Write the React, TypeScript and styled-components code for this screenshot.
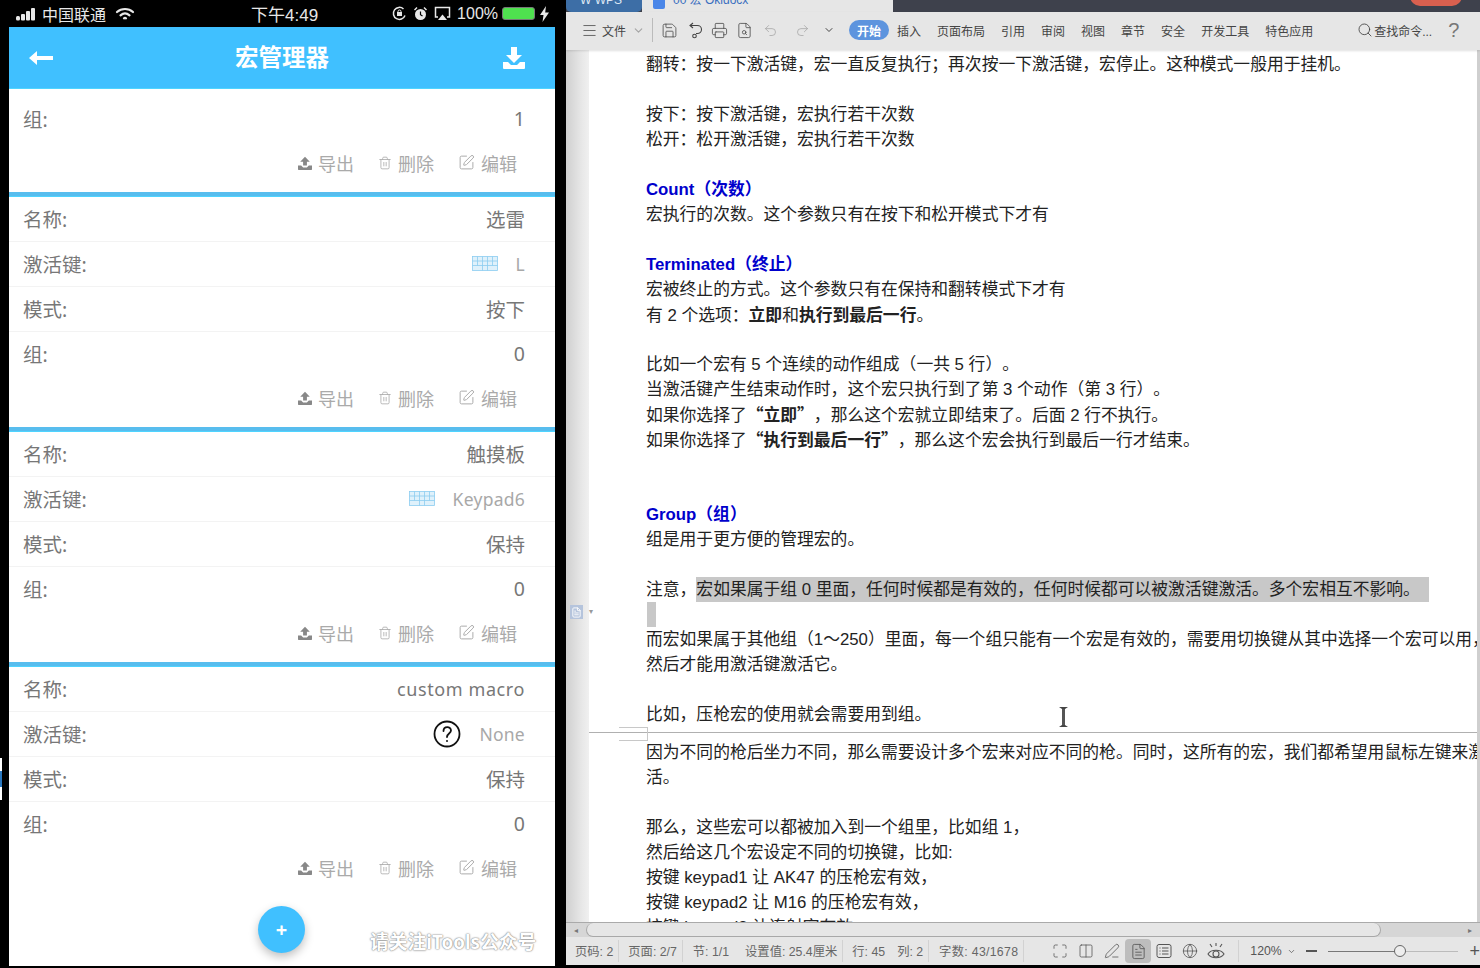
import styled, { createGlobalStyle } from "styled-components";
import {
  ChevronDown,
  Columns2,
  FileSearch,
  FileText,
  Globe,
  Maximize,
  Menu,
  PenLine,
  Printer,
  Redo2,
  Save,
  Search,
  SquarePen,
  Trash2,
  Undo2,
} from "lucide-react";

const GlobalStyle = createGlobalStyle`
  html, body {
    margin: 0;
    padding: 0;
    background: #000;
    overflow: hidden;
  }
  * { box-sizing: border-box; }
`;

const PHONE_FONT = `"Noto Sans", "Noto Sans CJK SC", sans-serif`;
const DOC_FONT = `"Liberation Sans", "Noto Sans CJK SC", sans-serif`;
const BLUE = "#40c0ff";

const Screen = styled.div`
  width: 1480px;
  height: 968px;
  display: flex;
  background: #000;
  overflow: hidden;
  position: relative;
`;

// Sliver of another window peeking out on the far left
const EdgeSliver = styled.div`
  position: absolute;
  left: 0;
  top: 758px;
  width: 2px;
  height: 42px;
  background: linear-gradient(#fff 0 30%, #2a78c0 30% 70%, #fff 70%);
`;

/* ---------- phone ---------- */

const Phone = styled.div`
  width: 546px;
  height: 966px;
  margin-left: 9px;
  display: flex;
  flex-direction: column;
  background: #fff;
  font-family: ${PHONE_FONT};
  position: relative;
`;

const StatusBar = styled.div`
  height: 27px;
  margin-left: -9px;
  width: 555px;
  background: #000;
  color: #e8e8e8;
  display: flex;
  align-items: center;
  padding: 0 6px 0 16px;
  font-size: 16px;
  position: relative;
`;

const Carrier = styled.div`
  display: flex;
  align-items: center;
  gap: 5px;
  flex: 1;
`;

const Clock = styled.div`
  position: absolute;
  left: 251px;
  font-size: 17px;
  font-family: "Liberation Sans", "Noto Sans CJK SC", sans-serif;
`;

const StatusRight = styled.div`
  display: flex;
  align-items: center;
  gap: 6px;
  font-family: "Liberation Sans", sans-serif;
  font-size: 16px;
`;

const Battery = styled.div`
  width: 33px;
  height: 13px;
  border-radius: 3px;
  border: 1px solid #777;
  background: #4fe04f;
  margin-left: -2px;
`;

const AppBar = styled.div`
  height: 62px;
  background: ${BLUE};
  border-bottom: 1px solid #4fd4ff;
  display: flex;
  align-items: center;
  justify-content: space-between;
  padding: 0 30px 0 20px;
  position: relative;
  color: #fff;
`;

const AppTitle = styled.div`
  position: absolute;
  left: 226px;
  top: 11px;
  font-size: 23.5px;
  line-height: 36px;
  font-weight: 700;
  font-family: "Noto Sans CJK SC", sans-serif;
`;

const Card = styled.div<{ $first?: boolean }>`
  display: flex;
  flex-direction: column;
  padding-top: ${(p) => (p.$first ? "8px" : "0")};
`;

const Row = styled.div<{ $noLine?: boolean }>`
  height: 45px;
  display: flex;
  align-items: center;
  justify-content: space-between;
  padding: 0 30px 1px 14px;
  border-bottom: 1px solid ${(p) => (p.$noLine ? "transparent" : "#f3f3f3")};
  color: #777;
  font-size: 19.5px;
`;

const Value = styled.span<{ $small?: boolean }>`
  display: flex;
  align-items: center;
  color: #777;
  font-size: ${(p) => (p.$small ? "18px" : "inherit")};
  letter-spacing: ${(p) => (p.$small ? "0.6px" : "0")};
`;

const KeyName = styled.span`
  font-size: 17.5px;
  color: #a8a8a8;
  letter-spacing: 0.25px;
`;

const KeyIcon = styled.span`
  display: flex;
  margin-right: 18px;
`;

const Actions = styled.div`
  height: 50px;
  padding: 0 38px 9px 0;
  display: flex;
  align-items: center;
  justify-content: flex-end;
  gap: 24px;
`;

const Action = styled.div`
  display: flex;
  align-items: center;
  gap: 6px;
  color: #aaa;
  font-size: 18px;
`;

const Divider = styled.div`
  height: 5px;
  background: #58bdee;
  border-bottom: 1px solid #4fd4ff;
`;

const Fab = styled.div`
  position: absolute;
  left: 249px;
  top: 906px;
  width: 47px;
  height: 47px;
  border-radius: 50%;
  background: ${BLUE};
  box-shadow: 0 4px 10px rgba(0, 0, 0, 0.25);
  color: #fff;
  display: flex;
  align-items: center;
  justify-content: center;
  font-size: 20px;
  font-weight: 700;
`;

const Watermark = styled.div`
  position: absolute;
  left: 361px;
  top: 929px;
  font-size: 18.8px;
  line-height: 26px;
  color: #fff;
  font-weight: 700;
  text-shadow: 0 0 2px #777, 0 0 1px #888;
  white-space: nowrap;
`;

/* ---------- WPS ---------- */

const Wps = styled.div`
  width: 914px;
  height: 965px;
  margin-left: 11px;
  display: flex;
  flex-direction: column;
  font-family: ${DOC_FONT};
  background: #e6e6e6;
`;

const TabBar = styled.div`
  height: 12px;
  display: flex;
  background: #3e414c;
  overflow: hidden;
  flex: none;
`;

const HomeTab = styled.div`
  width: 76px;
  background: #3d6ea6;
  color: #dfe9f5;
  border-radius: 0 0 5px 5px;
  display: flex;
  align-items: flex-end;
  padding: 0 0 5px 14px;
  font-size: 12px;
  line-height: 14px;
  white-space: nowrap;
`;

const DocTab = styled.div`
  width: 251px;
  background: #e6e6e6;
  color: #3b6fc0;
  display: flex;
  align-items: flex-end;
  padding: 0 0 5px 11px;
  gap: 8px;
  font-size: 12px;
  line-height: 14px;
  white-space: nowrap;
  position: relative;
`;

const DocTabIcon = styled.span`
  width: 12px;
  height: 12px;
  background: #4a86e8;
  border-radius: 2px;
  margin-bottom: -2px;
`;

const TabSpacer = styled.div`
  flex: 1;
`;

const RedPill = styled.div`
  width: 52px;
  margin: -12px 18px 6px 0;
  height: 18px;
  background: #d9604f;
  border-radius: 0 0 10px 10px;
`;

const Ribbon = styled.div`
  height: 38px;
  flex: none;
  display: flex;
  align-items: center;
  padding: 0 0 2px 15px;
  color: #444;
  font-size: 12px;
  box-shadow: 0 1px 2px rgba(0, 0, 0, 0.12);
  z-index: 2;
  background: #e6e6e6;
  white-space: nowrap;
`;

const RibbonSlot = styled.span<{ $w?: number; $ml?: number; $faded?: boolean }>`
  display: inline-flex;
  align-items: center;
  justify-content: center;
  flex: none;
  width: ${(p) => (p.$w ? `${p.$w}px` : "auto")};
  margin-left: ${(p) => p.$ml ?? 0}px;
  opacity: ${(p) => (p.$faded ? 0.4 : 1)};
`;

const HelpMark = styled(RibbonSlot)`
  font-size: 20px;
  color: #777;
`;

const RibbonSep = styled.span`
  width: 1px;
  height: 24px;
  background: #bbb;
  margin-left: 7px;
`;

const ActiveMenu = styled.span`
  width: 40px;
  height: 20px;
  margin-left: 13px;
  border-radius: 10px;
  background: #5d94de;
  color: #fff;
  display: flex;
  align-items: center;
  justify-content: center;
  font-weight: 700;
`;

const MenuItems = styled.div`
  display: flex;
  gap: 16px;
  margin-left: 8px;
`;

const Body = styled.div`
  flex: 1;
  min-height: 0;
  display: flex;
  position: relative;
`;

const Gutter = styled.div`
  width: 23px;
  flex: none;
  background: linear-gradient(90deg, #cfcfcf, #e8e8e8 70%, #f0f0f0);
`;

const Page = styled.div`
  flex: 1;
  min-width: 0;
  background: #fff;
  overflow: hidden;
  padding: 2px 0 0 57px;
  color: #222;
  font-size: 16.8px;
  position: relative;
  text-spacing-trim: space-all;
`;

const RightBar = styled.div`
  width: 3px;
  flex: none;
  background: #cfcfcf;
`;

const Line = styled.div`
  height: 25px;
  line-height: 25px;
  white-space: nowrap;
`;

const Heading = styled.span`
  color: #0000cc;
  font-weight: 700;
`;

const Strong = styled.b`
  font-family: "Noto Sans CJK SC", sans-serif;
`;

const Selected = styled.span`
  display: inline-block;
  background: #c8c8c8;
  height: 25px;
  padding-right: 4px;
`;

const CaretBlock = styled.span`
  display: block;
  width: 9px;
  height: 25px;
  margin-left: 1px;
  background: #c8c8c8;
`;

const PageBreak = styled.div`
  height: 13px;
  margin-left: -57px;
  position: relative;
  &::before {
    content: "";
    position: absolute;
    left: 0;
    right: 0;
    top: 5px;
    border-top: 1px solid #b0b0b0;
  }
  &::after {
    content: "";
    position: absolute;
    left: 30px;
    width: 28px;
    top: 0;
    height: 12px;
    border: 1px solid #c8c8c8;
    border-left: none;
  }
`;

const ParaMark = styled.div`
  position: absolute;
  left: 4px;
  top: 555px;
  width: 13px;
  height: 14px;
  background: #b5c4dc;
  display: flex;
  align-items: center;
  justify-content: center;
  &::after {
    content: "▾";
    position: absolute;
    left: 19px;
    top: 0;
    font-size: 8px;
    line-height: 14px;
    color: #999;
  }
`;

const IBeam = styled.div`
  position: absolute;
  left: 493px;
  top: 657px;
  width: 9px;
  height: 20px;
  border-left: 3px solid transparent;
  border-right: 3px solid transparent;
  background: #555;
  background-clip: content-box;
  border-top: 2px solid #444;
  border-bottom: 2px solid #444;
`;

const HScroll = styled.div`
  height: 15px;
  flex: none;
  display: flex;
  align-items: stretch;
  background: #d6d6d6;
  color: #777;
  font-size: 8px;
  border-top: 1px solid #aaa;
`;

const ScrollArrow = styled.span<{ $w: number }>`
  width: ${(p) => p.$w}px;
  display: flex;
  align-items: center;
  justify-content: center;
`;

const ScrollThumb = styled.div`
  width: 795px;
  border: 1px solid #a8a8a8;
  border-top: none;
  border-radius: 8px;
  background: #e6e6e6;
`;

const TrackFill = styled.div`
  flex: 1;
`;

const StatusStrip = styled.div`
  height: 28px;
  flex: none;
  display: flex;
  align-items: center;
  padding-left: 9px;
  font-size: 12.3px;
  color: #666;
  white-space: nowrap;
  background: #e6e6e6;
`;

const StatusItem = styled.span<{ $sep?: boolean; $ml?: number; $wide?: boolean }>`
  height: 22px;
  display: flex;
  align-items: center;
  gap: 12px;
  padding-right: 5px;
  margin-right: 9px;
  margin-left: ${(p) => p.$ml ?? 0}px;
  letter-spacing: ${(p) => (p.$wide ? "0.3px" : "0")};
  border-right: 1px solid ${(p) => (p.$sep ? "#d2d2d2" : "transparent")};
`;

const ViewIcons = styled.div`
  display: flex;
  align-items: center;
  margin-left: 14px;
`;

const ViewIcon = styled.span<{ $active?: boolean }>`
  width: 26px;
  height: 24px;
  display: flex;
  align-items: center;
  justify-content: center;
  border-radius: 4px;
  background: ${(p) => (p.$active ? "#bdbdbd" : "transparent")};
  color: #555;
`;

const ZoomLabel = styled.span`
  margin-left: 9px;
  padding-left: 11px;
  height: 22px;
  display: flex;
  align-items: center;
  border-left: 1px solid #d2d2d2;
  color: #555;
  gap: 5px;
`;

const ZoomMinus = styled.span`
  width: 12px;
  height: 2px;
  background: #555;
  margin-left: 10px;
`;

const Slider = styled.div`
  width: 138px;
  height: 1px;
  margin-left: 11px;
  background: linear-gradient(90deg, #777 52%, #bbb 52%);
  position: relative;
`;

const Knob = styled.span`
  position: absolute;
  left: 66px;
  top: -6px;
  width: 12px;
  height: 12px;
  border-radius: 50%;
  border: 1px solid #666;
  background: #eee;
`;

const ZoomPlus = styled.span`
  margin-left: 11px;
  font-size: 18px;
  color: #555;
`;

function SignalIcon() {
  return (
    <svg width="21" height="14" viewBox="0 0 21 14" fill="#e8e8e8">
      <rect x="0" y="9" width="4" height="4.500" rx="1.500" />
      <rect x="5" y="7" width="4" height="6.500" rx="1" />
      <rect x="10" y="4" width="4" height="9.500" rx="1" />
      <rect x="15" y="1" width="4" height="12.500" rx="1" />
    </svg>
  );
}

function WifiIcon() {
  return (
    <svg width="20" height="14" viewBox="0 0 20 14" fill="none" stroke="#e8e8e8" strokeWidth="2.200" strokeLinecap="round" style={{ marginLeft: 4 }}>
      <path d="M2 5c4.500-4 11.500-4 16 0" />
      <path d="M5.500 8.300c2.700-2.300 6.300-2.300 9 0" />
      <path d="M9 11.300c.6-.5 1.400-.5 2 0" />
    </svg>
  );
}

function LockIcon() {
  return (
    <svg width="15" height="15" viewBox="0 0 15 15" fill="none" stroke="#e8e8e8" strokeWidth="1.500">
      <path d="M13 9.500A6 6 0 1 1 11.500 3" />
      <rect x="5" y="6" width="5" height="4" fill="#e8e8e8" stroke="none" />
      <circle cx="7.500" cy="5.500" r="1.500" strokeWidth="1" />
    </svg>
  );
}

function AlarmIcon() {
  return (
    <svg width="15" height="15" viewBox="0 0 15 15" fill="#e8e8e8">
      <circle cx="7.500" cy="8.500" r="5.500" />
      <path d="M1 3.500 3.500 1l1 1L2 4.500zM14 3.500 11.500 1l-1 1L13 4.500z" />
      <path d="M7.500 5.500v3.200l2 1.200" stroke="#000" strokeWidth="1.200" fill="none" />
    </svg>
  );
}

function AirplayIcon() {
  return (
    <svg width="17" height="15" viewBox="0 0 17 15" fill="none" stroke="#e8e8e8" strokeWidth="1.500">
      <path d="M4 11H1.500V1.500h14V11H13" />
      <path d="M8.500 8.500 13 14H4z" fill="#e8e8e8" stroke="none" />
    </svg>
  );
}

function BoltIcon() {
  return (
    <svg width="9" height="16" viewBox="0 0 9 16" fill="#e8e8e8" style={{ marginLeft: -1 }}>
      <path d="M6 0 0 9h3.500L2.500 16 9 6.500H5.200z" />
    </svg>
  );
}

function BackArrow() {
  return (
    <svg width="24" height="14" viewBox="0 0 24 14" fill="#fff">
      <path d="M8 0v5h16v4H8v5L0 7z" />
    </svg>
  );
}

function TrayArrow({ size, up, color }: { size: number; up?: boolean; color: string }) {
  return (
    <svg width={size} height={size} viewBox="0 0 22 22" fill={color}>
      {up ? <path d="M11 1 3.500 9H8v6h6V9h4.500z" /> : <path d="M8 0h6v8h5l-8 8-8-8h5z" />}
      <path d="M0 15h5l3 3h6l3-3h5v6a1 1 0 0 1-1 1H1a1 1 0 0 1-1-1z" />
    </svg>
  );
}

function KeyboardIcon() {
  return (
    <svg width="26" height="15" viewBox="0 0 26 15" fill="#dff1fb" stroke="#8ccdf0" strokeWidth="0.800">
      <rect x="0.500" y="0.500" width="25" height="14" />
      <path d="M0.500 5h25M0.500 9.500h25M5.500 .5v9M10.500 .5v14M15.500 .5v14M20.500 .5v9" fill="none" />
    </svg>
  );
}

function QuestionIcon() {
  return (
    <svg width="28" height="28" viewBox="0 0 28 28" fill="none" stroke="#111" strokeWidth="1.800">
      <circle cx="14" cy="14" r="12.500" />
      <path d="M10.500 11c0-5 7.500-5 7.500-.4 0 3-4 3-4 6.400" strokeLinecap="round" />
      <circle cx="14" cy="21" r="1" fill="#111" stroke="none" />
    </svg>
  );
}

function EyeIcon() {
  return (
    <svg width="18" height="18" viewBox="0 0 18 18" fill="none" stroke="#555" strokeWidth="1.100">
      <path d="M1 12c3-5 13-5 16 0-3 5-13 5-16 0z" />
      <circle cx="9" cy="12" r="3" />
      <path d="M9 1v3M3 2l2 3M15 2l-2 3" />
    </svg>
  );
}

function OutlineIcon() {
  return (
    <svg width="16" height="16" viewBox="0 0 16 16" fill="none" stroke="#555" strokeWidth="1">
      <rect x="1" y="1.500" width="14" height="13" rx="2" />
      <path d="M6 5h6.500M6 8h6.500M6 11h6.500M3.500 5h1M3.500 8h1M3.500 11h1" />
    </svg>
  );
}

function SendIcon() {
  return (
    <svg width="17" height="17" viewBox="0 0 17 17" fill="none" stroke="#444" strokeWidth="1.100">
      <path d="M2 3.500h7.500a4 4 0 0 1 0 8H8" />
      <path d="M5 1 2 3.500 5 6" />
      <circle cx="6.500" cy="14" r="1.800" />
    </svg>
  );
}

function ActionRow() {
  return (
    <Actions>
      <Action>
        <TrayArrow size={14} up color="#888" />
        导出
      </Action>
      <Action>
        <Trash2 size={14} strokeWidth={1.4} color="#aaa" />
        删除
      </Action>
      <Action>
        <SquarePen size={17} strokeWidth={1.4} color="#aaa" />
        编辑
      </Action>
    </Actions>
  );
}

type Macro = {
  name: string;
  nameSmall?: boolean;
  keyIcon: "keyboard" | "question";
  keyName: string;
  mode: string;
};

const macros: Macro[] = [
  { name: "选雷", keyIcon: "keyboard", keyName: "L", mode: "按下" },
  { name: "触摸板", keyIcon: "keyboard", keyName: "Keypad6", mode: "保持" },
  { name: "custom macro", nameSmall: true, keyIcon: "question", keyName: "None", mode: "保持" },
];

function MacroCard({ macro, last }: { macro: Macro; last: boolean }) {
  return (
    <Card>
      <Row>
        名称:
        <Value $small={macro.nameSmall}>{macro.name}</Value>
      </Row>
      <Row>
        激活键:
        <Value>
          <KeyIcon>{macro.keyIcon === "keyboard" ? <KeyboardIcon /> : <QuestionIcon />}</KeyIcon>
          <KeyName>{macro.keyName}</KeyName>
        </Value>
      </Row>
      <Row>
        模式:
        <Value>{macro.mode}</Value>
      </Row>
      <Row $noLine>
        组:
        <Value>0</Value>
      </Row>
      <ActionRow />
      {!last && <Divider />}
    </Card>
  );
}

const docLines: React.ReactNode[] = [
  "翻转：按一下激活键，宏一直反复执行；再次按一下激活键，宏停止。这种模式一般用于挂机。",
  "",
  "按下：按下激活键，宏执行若干次数",
  "松开：松开激活键，宏执行若干次数",
  "",
  <Heading>Count（次数）</Heading>,
  "宏执行的次数。这个参数只有在按下和松开模式下才有",
  "",
  <Heading>Terminated（终止）</Heading>,
  "宏被终止的方式。这个参数只有在保持和翻转模式下才有",
  <>
    有 2 个选项：<Strong>立即</Strong>和<Strong>执行到最后一行</Strong>。
  </>,
  "",
  "比如一个宏有 5 个连续的动作组成（一共 5 行）。",
  "当激活键产生结束动作时，这个宏只执行到了第 3 个动作（第 3 行）。",
  <>
    如果你选择了<Strong>“立即”</Strong>，那么这个宏就立即结束了。后面 2 行不执行。
  </>,
  <>
    如果你选择了<Strong>“执行到最后一行”</Strong>，那么这个宏会执行到最后一行才结束。
  </>,
  "",
  "",
  <Heading>Group（组）</Heading>,
  "组是用于更方便的管理宏的。",
  "",
  <>
    注意，<Selected>宏如果属于组 0 里面，任何时候都是有效的，任何时候都可以被激活键激活。多个宏相互不影响。&nbsp;</Selected>
  </>,
  <CaretBlock />,
  "而宏如果属于其他组（1～250）里面，每一个组只能有一个宏是有效的，需要用切换键从其中选择一个宏可以用，",
  "然后才能用激活键激活它。",
  "",
  "比如，压枪宏的使用就会需要用到组。",
];

const docLinesAfterBreak = [
  "因为不同的枪后坐力不同，那么需要设计多个宏来对应不同的枪。同时，这所有的宏，我们都希望用鼠标左键来激",
  "活。",
  "",
  "那么，这些宏可以都被加入到一个组里，比如组 1，",
  "然后给这几个宏设定不同的切换键，比如:",
  "按键 keypad1 让 AK47 的压枪宏有效，",
  "按键 keypad2 让 M16 的压枪宏有效，",
  "按键 keypad3 让连射宏有效，",
];

const menuItems = ["插入", "页面布局", "引用", "审阅", "视图", "章节", "安全", "开发工具", "特色应用"];

export default function App() {
  return (
    <Screen>
      <GlobalStyle />
      <EdgeSliver />
      <Phone>
        <StatusBar>
          <Carrier>
            <SignalIcon />
            <span>中国联通</span>
            <WifiIcon />
          </Carrier>
          <Clock>下午4:49</Clock>
          <StatusRight>
            <LockIcon />
            <AlarmIcon />
            <AirplayIcon />
            100%
            <Battery />
            <BoltIcon />
          </StatusRight>
        </StatusBar>
        <AppBar>
          <BackArrow />
          <AppTitle>宏管理器</AppTitle>
          <TrayArrow size={22} color="#fff" />
        </AppBar>
        <Card $first>
          <Row $noLine>
            组:
            <Value>1</Value>
          </Row>
          <ActionRow />
          <Divider />
        </Card>
        {macros.map((m, i) => (
          <MacroCard key={m.name} macro={m} last={i === macros.length - 1} />
        ))}
        <Fab>+</Fab>
        <Watermark>请关注iTools公众号</Watermark>
      </Phone>
      <Wps>
        <TabBar>
          <HomeTab>W WPS</HomeTab>
          <DocTab>
            <DocTabIcon />
            00 宏 Okldocx
          </DocTab>
          <TabSpacer />
          <RedPill />
        </TabBar>
        <Ribbon>
          <Menu size={17} strokeWidth={1.1} />
          <RibbonSlot $ml={4}>文件</RibbonSlot>
          <RibbonSlot $ml={6} $faded>
            <ChevronDown size={13} />
          </RibbonSlot>
          <RibbonSep />
          <RibbonSlot $ml={8} $w={17}>
            <Save size={17} strokeWidth={1.1} />
          </RibbonSlot>
          <RibbonSlot $ml={10} $w={17}>
            <SendIcon />
          </RibbonSlot>
          <RibbonSlot $ml={6} $w={17}>
            <Printer size={17} strokeWidth={1.1} />
          </RibbonSlot>
          <RibbonSlot $ml={8} $w={17}>
            <FileSearch size={17} strokeWidth={1.1} />
          </RibbonSlot>
          <RibbonSlot $ml={10} $w={15} $faded>
            <Undo2 size={15} strokeWidth={1.2} />
          </RibbonSlot>
          <RibbonSlot $ml={17} $w={15} $faded>
            <Redo2 size={15} strokeWidth={1.2} />
          </RibbonSlot>
          <RibbonSlot $ml={11} $w={15}>
            <ChevronDown size={12} />
          </RibbonSlot>
          <ActiveMenu>开始</ActiveMenu>
          <MenuItems>
            {menuItems.map((item) => (
              <span key={item}>{item}</span>
            ))}
          </MenuItems>
          <RibbonSlot $ml={44}>
            <Search size={16} strokeWidth={1.3} />
          </RibbonSlot>
          <RibbonSlot $ml={1}>查找命令...</RibbonSlot>
          <HelpMark $ml={16}>?</HelpMark>
        </Ribbon>
        <Body>
          <Gutter />
          <Page>
            {docLines.map((line, i) => (
              <Line key={i}>{line}</Line>
            ))}
            <PageBreak />
            {docLinesAfterBreak.map((line, i) => (
              <Line key={i}>{line}</Line>
            ))}
          </Page>
          <RightBar />
          <ParaMark>
            <FileText size={11} color="#fff" />
          </ParaMark>
          <IBeam />
        </Body>
        <HScroll>
          <ScrollArrow $w={20}>◂</ScrollArrow>
          <ScrollThumb />
          <TrackFill />
          <ScrollArrow $w={20}>▸</ScrollArrow>
        </HScroll>
        <StatusStrip>
          <StatusItem $sep>页码: 2</StatusItem>
          <StatusItem $sep>页面: 2/7</StatusItem>
          <StatusItem $ml={1}>节: 1/1</StatusItem>
          <StatusItem $sep $ml={1}>设置值: 25.4厘米</StatusItem>
          <StatusItem $sep>
            <span>行: 45</span>
            <span>列: 2</span>
          </StatusItem>
          <StatusItem $sep $wide $ml={1}>字数: 43/1678</StatusItem>
          <ViewIcons>
            <ViewIcon>
              <Maximize size={16} strokeWidth={1.2} />
            </ViewIcon>
            <ViewIcon>
              <Columns2 size={16} strokeWidth={1.2} />
            </ViewIcon>
            <ViewIcon>
              <PenLine size={16} strokeWidth={1.2} />
            </ViewIcon>
            <ViewIcon $active>
              <FileText size={17} strokeWidth={1.2} />
            </ViewIcon>
            <ViewIcon>
              <OutlineIcon />
            </ViewIcon>
            <ViewIcon>
              <Globe size={16} strokeWidth={1.2} />
            </ViewIcon>
            <ViewIcon>
              <EyeIcon />
            </ViewIcon>
          </ViewIcons>
          <ZoomLabel>
            120%
            <ChevronDown size={9} />
          </ZoomLabel>
          <ZoomMinus />
          <Slider>
            <Knob />
          </Slider>
          <ZoomPlus>+</ZoomPlus>
        </StatusStrip>
      </Wps>
    </Screen>
  );
}
